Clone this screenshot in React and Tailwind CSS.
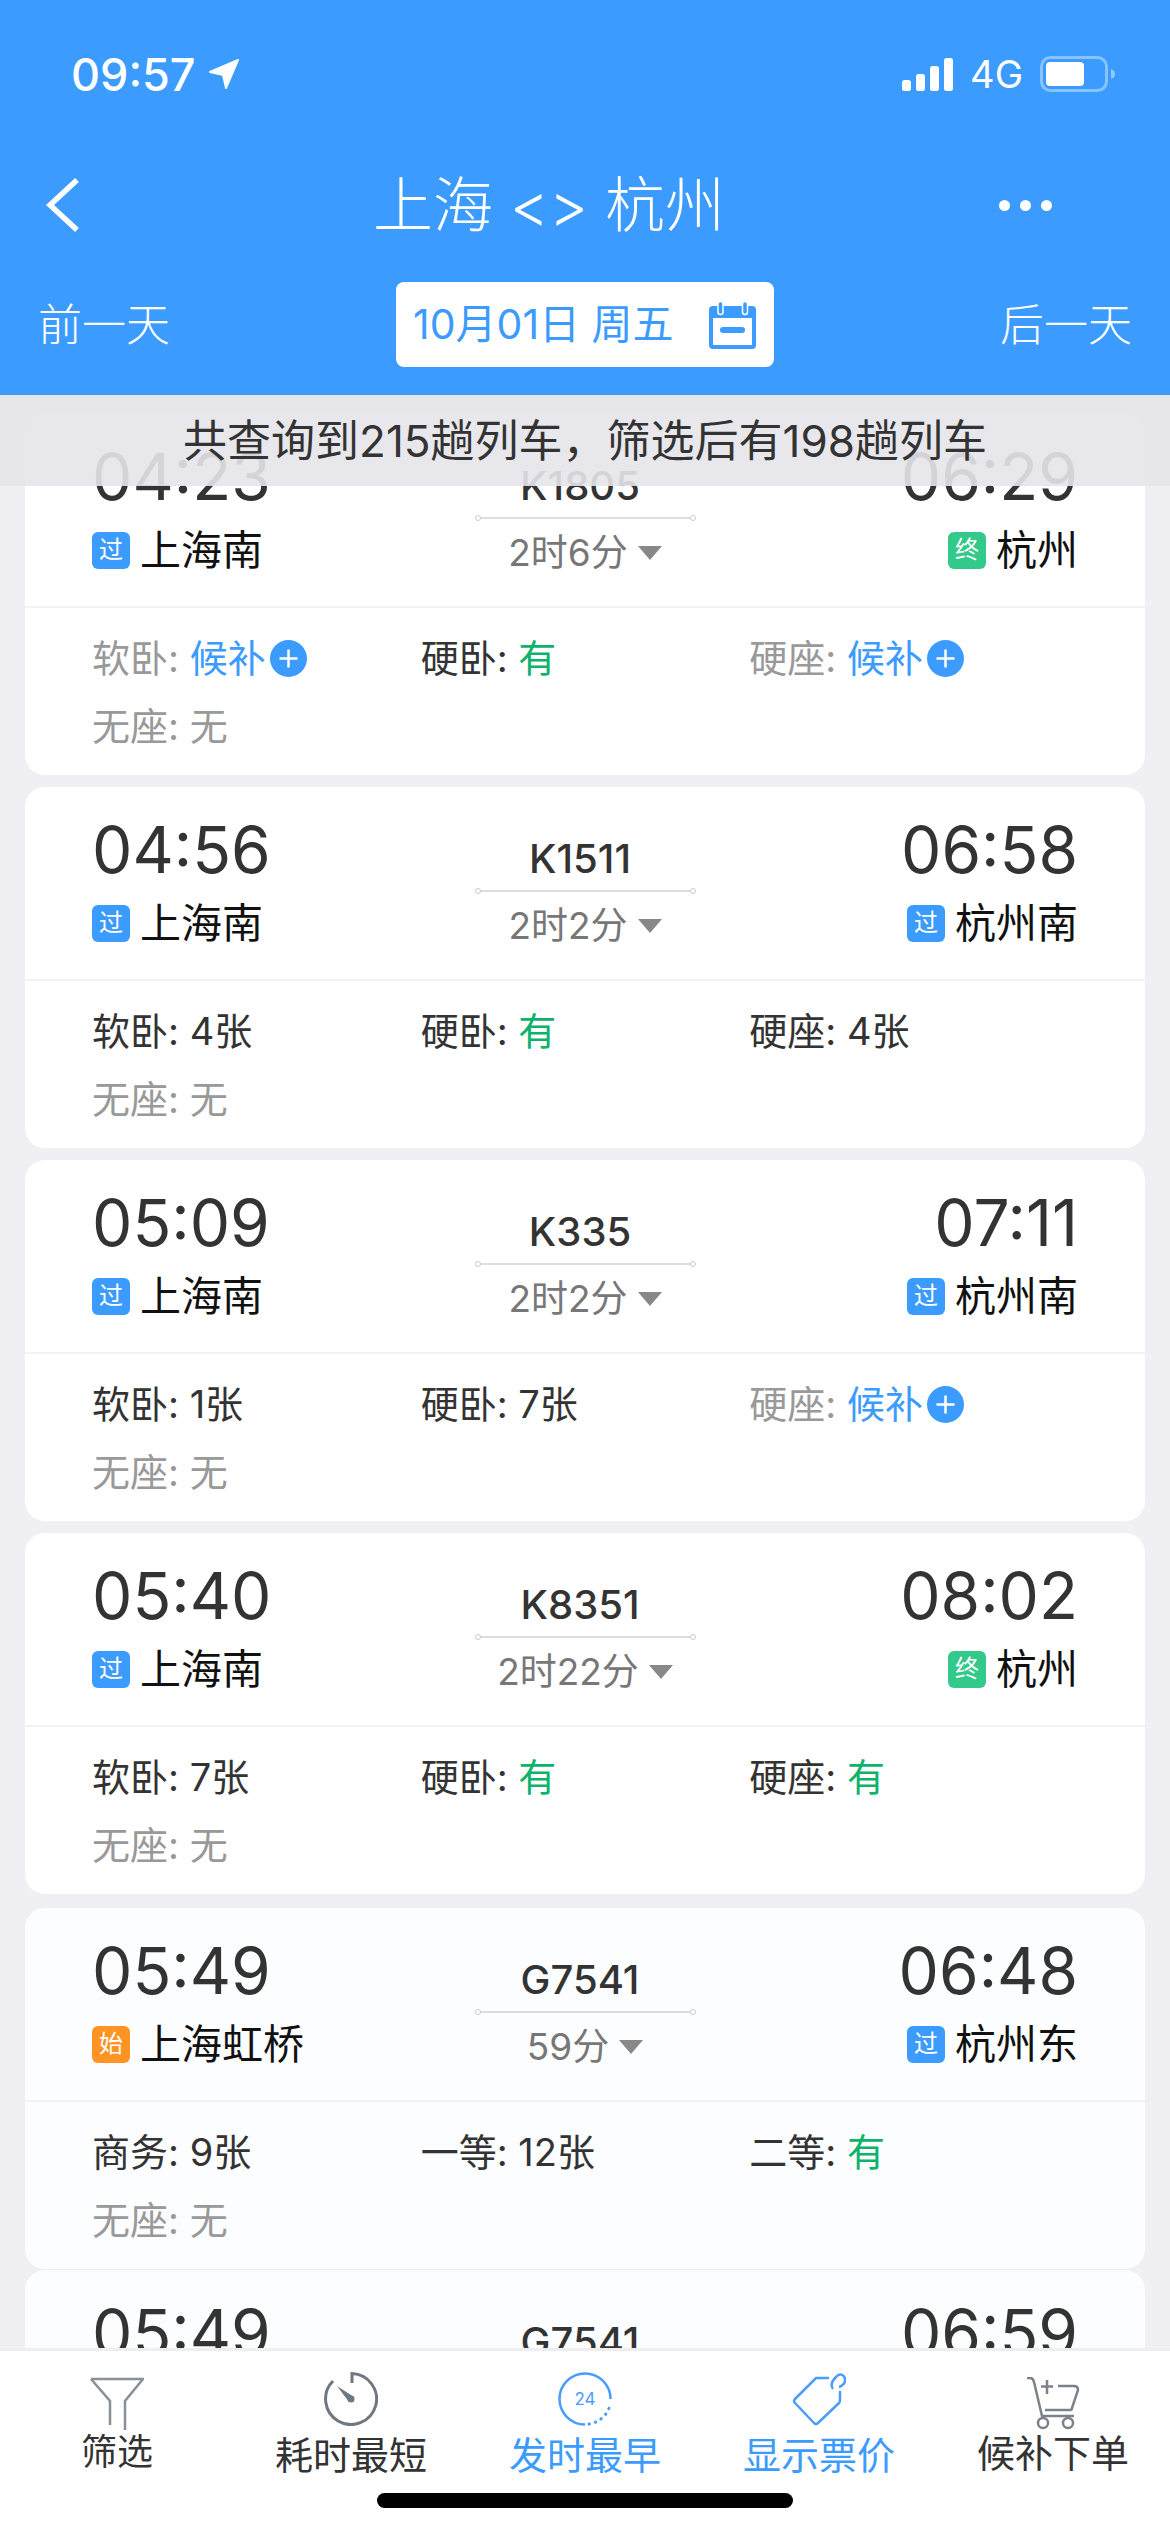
import React from 'react';

const trains = [
  {
    from: '04:23', to: '06:29', code: 'K1805', dur: '2时6分', start: '上海南', end: '杭州', startTag: '过', endTag: '终', gap: 'mt-0',
    seats: [
      { name: '软卧', val: '候补', off: true },
      { name: '硬卧', val: '有' },
      { name: '硬座', val: '候补', off: true },
      { name: '无座', val: '无', none: true },
    ],
  },
  {
    from: '04:56', to: '06:58', code: 'K1511', dur: '2时2分', start: '上海南', end: '杭州南', startTag: '过', endTag: '过', gap: 'mt-[12px]',
    seats: [
      { name: '软卧', val: '4张' },
      { name: '硬卧', val: '有' },
      { name: '硬座', val: '4张' },
      { name: '无座', val: '无', none: true },
    ],
  },
  {
    from: '05:09', to: '07:11', code: 'K335', dur: '2时2分', start: '上海南', end: '杭州南', startTag: '过', endTag: '过', gap: 'mt-[12px]',
    seats: [
      { name: '软卧', val: '1张' },
      { name: '硬卧', val: '7张' },
      { name: '硬座', val: '候补', off: true },
      { name: '无座', val: '无', none: true },
    ],
  },
  {
    from: '05:40', to: '08:02', code: 'K8351', dur: '2时22分', start: '上海南', end: '杭州', startTag: '过', endTag: '终', gap: 'mt-[12px]',
    seats: [
      { name: '软卧', val: '7张' },
      { name: '硬卧', val: '有' },
      { name: '硬座', val: '有' },
      { name: '无座', val: '无', none: true },
    ],
  },
  {
    from: '05:49', to: '06:48', code: 'G7541', dur: '59分', start: '上海虹桥', end: '杭州东', startTag: '始', endTag: '过', gap: 'mt-[14px]', tint: true,
    seats: [
      { name: '商务', val: '9张' },
      { name: '一等', val: '12张' },
      { name: '二等', val: '有' },
      { name: '无座', val: '无', none: true },
    ],
  },
  { from: '05:49', to: '06:59', code: 'G7541', gap: 'mt-[1px]', tint: true, seats: [] },
];

function Tag({ text }) {
  const color = text === '始' ? 'bg-[#ff9425]' : text === '终' ? 'bg-[#33c98a]' : 'bg-[#3b9bff]';
  return (
    <span className={`flex h-[37px] w-[38px] items-center justify-center rounded-[6px] text-[24px] leading-none text-white ${color}`}>
      {text}
    </span>
  );
}

function Seat({ seat }) {
  const labelColor = seat.off || seat.none ? 'text-[#999999]' : 'text-[#333333]';
  let valColor = 'text-[#333333]';
  if (seat.none) valColor = 'text-[#999999]';
  if (seat.off) valColor = 'text-[#3b9bff]';
  if (seat.val === '有') valColor = 'text-[#0db26b]';
  return (
    <div className="flex h-[68px] items-center text-[38px] leading-none">
      <span className={labelColor}>{seat.name}:&nbsp;</span>
      <span className={valColor}>{seat.val}</span>
      {seat.off && (
        <svg className="ml-[4px]" width="37" height="37" viewBox="0 0 37 37">
          <circle cx="18.5" cy="18.5" r="18.5" fill="#3b9bff" />
          <path d="M18.5 9.5V27.5M9.5 18.5H27.5" stroke="#fff" strokeWidth="2.5" />
        </svg>
      )}
    </div>
  );
}

function TrainCard({ t }) {
  return (
    <div className={`h-[361px] shrink-0 overflow-hidden rounded-[20px] ${t.gap} ${t.tint ? 'bg-[#fcfdff]' : 'bg-white'}`}>
      <div className="flex h-[194px] justify-between border-b-2 border-[#f2f2f4] px-[67px] pt-[26px]">
        <div className="flex w-[300px] flex-col items-start">
          <div className="text-[64px] leading-[74px] text-[#333333]">{t.from}</div>
          {t.start && (
            <div className="mt-[14px] flex items-center gap-[10px]">
              <Tag text={t.startTag} />
              <span className="text-[41px] leading-[44px] text-[#111111]">{t.start}</span>
            </div>
          )}
        </div>
        <div className="flex w-[217px] flex-col items-center">
          <div className="mt-[26px] pr-[10px] text-[40px] font-medium leading-[40px] text-[#333333]">{t.code}</div>
          <div className="relative mt-[11px] h-[2px] w-full bg-[#dddddd]">
            <span className="absolute -left-[2px] -top-[2px] h-[6px] w-[6px] rounded-full border border-[#cccccc] bg-white" />
            <span className="absolute -right-[2px] -top-[2px] h-[6px] w-[6px] rounded-full border border-[#cccccc] bg-white" />
          </div>
          {t.dur && (
            <div className="mt-[12px] flex items-center gap-[10px] text-[37px] leading-[44px] text-[#777777]">
              <span>{t.dur}</span>
              <svg width="24" height="14" viewBox="0 0 24 14">
                <path d="M0 0H24L12 14Z" fill="#888888" />
              </svg>
            </div>
          )}
        </div>
        <div className="flex w-[300px] flex-col items-end">
          <div className="text-[64px] leading-[74px] text-[#333333]">{t.to}</div>
          {t.end && (
            <div className="mt-[14px] flex items-center gap-[10px]">
              <Tag text={t.endTag} />
              <span className="text-[41px] leading-[44px] text-[#111111]">{t.end}</span>
            </div>
          )}
        </div>
      </div>
      <div className="grid grid-cols-3 px-[67px] pt-[16px]">
        {t.seats.map((s) => (
          <Seat key={s.name} seat={s} />
        ))}
      </div>
    </div>
  );
}

function StatusBar() {
  return (
    <div className="flex h-[148px] items-center justify-between pl-[71px] pr-[55px]">
      <div className="flex items-center gap-[12px] text-[45px] font-medium leading-none text-white">
        <span>09:57</span>
        <svg width="32" height="32" viewBox="0 0 32 32">
          <path d="M2 14L30 2L18 30L15 17Z" fill="#fff" stroke="#fff" strokeWidth="2" strokeLinejoin="round" />
        </svg>
      </div>
      <div className="flex items-center">
        <svg width="51" height="33" viewBox="0 0 51 33" fill="#fff">
          <rect x="0" y="22" width="9" height="11" rx="2.5" />
          <rect x="14" y="16" width="9" height="17" rx="2.5" />
          <rect x="28" y="8" width="9" height="25" rx="2.5" />
          <rect x="42" y="0" width="9" height="33" rx="2.5" />
        </svg>
        <span className="ml-[17px] text-[38px] leading-none text-white">4G</span>
        <svg className="ml-[17px]" width="75" height="36" viewBox="0 0 75 36">
          <rect x="1.5" y="1.5" width="65" height="33" rx="9" fill="none" stroke="#fff" strokeOpacity="0.4" strokeWidth="3" />
          <rect x="6" y="6" width="38" height="24" rx="4" fill="#fff" />
          <path d="M71 13C74 14 75 16 75 18C75 20 74 22 71 23Z" fill="#fff" fillOpacity="0.45" />
        </svg>
      </div>
    </div>
  );
}

function NavBar() {
  return (
    <div className="flex h-[114px] items-center justify-between px-[46px]">
      <div className="flex-1">
        <svg width="34" height="54" viewBox="0 0 34 54" fill="none">
          <path d="M31 2L4 27L31 52" stroke="#fff" strokeWidth="5.5" />
        </svg>
      </div>
      <div className="text-[60px] font-light leading-none text-white">上海 &lt;&gt; 杭州</div>
      <div className="flex flex-1 justify-end pr-[72px]">
        <div className="flex gap-[10px]">
          <span className="h-[11px] w-[11px] rounded-full bg-white" />
          <span className="h-[11px] w-[11px] rounded-full bg-white" />
          <span className="h-[11px] w-[11px] rounded-full bg-white" />
        </div>
      </div>
    </div>
  );
}

function DateBar() {
  return (
    <div className="mt-[20px] flex items-center justify-between px-[38px]">
      <div className="flex-1 text-[44px] font-light leading-none text-white">前一天</div>
      <div className="flex h-[85px] w-[378px] items-center justify-between rounded-[8px] bg-white pl-[17px] pr-[18px] text-[41px] leading-none text-[#3b9bff]">
        <span>10月01日 周五</span>
        <svg width="47" height="48" viewBox="0 0 47 48">
          <rect x="0" y="5" width="47" height="43" rx="4" fill="#3b9bff" />
          <rect x="4" y="17" width="39" height="27" fill="#fff" />
          <rect x="11" y="26" width="25" height="6" rx="3" fill="#3b9bff" />
          <rect x="9" y="0.5" width="5" height="13" rx="2.5" fill="#3b9bff" stroke="#fff" strokeWidth="1.5" />
          <rect x="33.5" y="0.5" width="5" height="13" rx="2.5" fill="#3b9bff" stroke="#fff" strokeWidth="1.5" />
        </svg>
      </div>
      <div className="flex-1 text-right text-[44px] font-light leading-none text-white">后一天</div>
    </div>
  );
}

function FilterIcon() {
  return (
    <svg width="54" height="54" viewBox="0 0 54 54" fill="none" stroke="#8a9098" strokeWidth="2.5">
      <path d="M1 2H53L35 24V53M1 2L20 24V48" />
    </svg>
  );
}

function WatchIcon() {
  return (
    <svg width="54" height="54" viewBox="0 0 54 54" fill="none">
      <path d="M28 11V1.5A25.5 25.5 0 1 1 9 9" stroke="#6f7780" strokeWidth="3" />
      <path d="M13 14L30 25L25 30Z" fill="#6f7780" />
      <circle cx="27" cy="27" r="3.5" fill="#6f7780" />
    </svg>
  );
}

function ClockIcon() {
  return (
    <svg width="54" height="54" viewBox="0 0 54 54" fill="none" stroke="#4a9cff" strokeWidth="2.5">
      <path d="M52.5 27A25.5 25.5 0 1 0 27 52.5" />
      <path d="M31 52A25.5 25.5 0 0 0 52.5 31" strokeLinecap="round" strokeDasharray="0.5 6" strokeWidth="3" />
      <text x="27" y="33" textAnchor="middle" fontSize="17" fill="#4a9cff" stroke="none">24</text>
    </svg>
  );
}

function TagIcon() {
  return (
    <svg width="54" height="54" viewBox="0 0 54 54" fill="none" stroke="#4a9cff" strokeWidth="2.5">
      <path d="M37 6H24L3 27Q1 29 3 31L22 51Q24 53 26 51L47 31Q48 30 48 28V19" />
      <path d="M41 17C38 13 41 8 44 5C47 1 52 2 53 7C54 11 50 14 47 15" />
    </svg>
  );
}

function CartIcon() {
  return (
    <svg width="54" height="54" viewBox="0 0 54 54" fill="none" stroke="#7b828a" strokeWidth="2.5">
      <path d="M1 1H4Q7 1 8 5L16 39H48" />
      <path d="M32 9H48Q52 9 52 13L46 31Q46 33 44 33H19" />
      <path d="M21 3V17M15 9.5H27" />
      <circle cx="17" cy="46" r="5" />
      <circle cx="42" cy="46" r="5" />
    </svg>
  );
}

const tabs = [
  { label: '筛选', icon: <FilterIcon />, box: 'pt-[26px]', text: 'text-[36px] text-[#333333] mt-[3px]' },
  { label: '耗时最短', icon: <WatchIcon />, box: 'pt-[21px]', text: 'text-[38px] text-[#333333] mt-[10px]' },
  { label: '发时最早', icon: <ClockIcon />, box: 'pt-[21px]', text: 'text-[38px] text-[#3b9bff] mt-[10px]' },
  { label: '显示票价', icon: <TagIcon />, box: 'pt-[21px]', text: 'text-[38px] text-[#3b9bff] mt-[10px]' },
  { label: '候补下单', icon: <CartIcon />, box: 'pt-[26px]', text: 'text-[38px] text-[#333333] mt-[3px]' },
];

export default function App() {
  return (
    <div className="flex h-[2532px] w-[1170px] flex-col overflow-hidden bg-white font-['Inter','Noto_Sans_CJK_SC',sans-serif]">
      <div className="h-[395px] shrink-0 bg-[#3b9bff]">
        <StatusBar />
        <NavBar />
        <DateBar />
      </div>

      <div className="relative min-h-0 flex-1 overflow-hidden bg-[#efeff4]">
        <div className="flex flex-col px-[25px] pt-[19px]">
          {trains.map((t, i) => (
            <TrainCard key={i} t={t} />
          ))}
        </div>
        {/* 顶部半透明提示条 */}
        <div className="absolute inset-x-0 top-0 flex h-[91px] items-center justify-center bg-[#e6e6ea]/90 text-[44px] leading-none text-[#333333]">
          共查询到215趟列车，筛选后有198趟列车
        </div>
      </div>

      <div className="h-[184px] shrink-0 border-t-[3px] border-[#eeeeee] bg-white">
        <div className="grid h-[128px] grid-cols-5 px-[-1px]">
          {tabs.map((tab) => (
            <div key={tab.label} className={`flex flex-col items-center ${tab.box}`}>
              {tab.icon}
              <div className={`leading-none ${tab.text}`}>{tab.label}</div>
            </div>
          ))}
        </div>
        <div className="mx-auto mt-[14px] h-[15px] w-[416px] rounded-full bg-black" />
      </div>
    </div>
  );
}
